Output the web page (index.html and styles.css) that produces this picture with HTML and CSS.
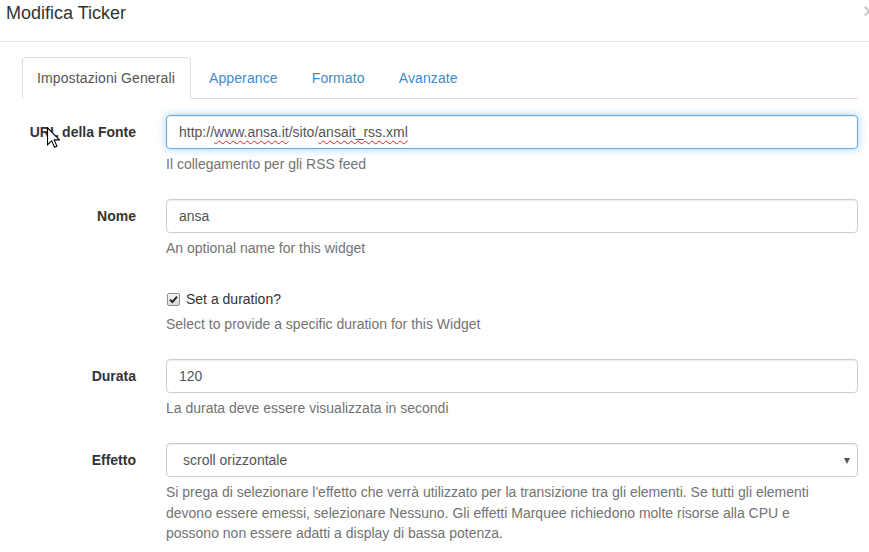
FILE: index.html
```
<!DOCTYPE html>
<html lang="it">
<head>
<meta charset="utf-8">
<title>Modifica Ticker</title>
<link rel="stylesheet" href="styles.css">
</head>
<body>
<div class="modal">
  <div class="modal-header">
    <h4 class="modal-title">Modifica Ticker</h4>
    <span class="close">&times;</span>
  </div>
  <div class="modal-body">
    <ul class="nav-tabs">
      <li class="tab active"><a>Impostazioni Generali</a></li>
      <li class="tab"><a>Apperance</a></li>
      <li class="tab"><a>Formato</a></li>
      <li class="tab"><a>Avanzate</a></li>
    </ul>
    <div class="tab-pane">
      <div class="form-group">
        <label class="control-label">URL della Fonte</label>
        <div class="field">
          <div class="form-control focused">http://<span class="misspelled">www.ansa.it</span>/sito/<span class="misspelled">ansait_rss.xml</span></div>
          <p class="help-block">Il collegamento per gli RSS feed</p>
        </div>
      </div>
      <div class="form-group">
        <label class="control-label">Nome</label>
        <div class="field">
          <div class="form-control">ansa</div>
          <p class="help-block">An optional name for this widget</p>
        </div>
      </div>
      <div class="form-group">
        <span class="control-label"></span>
        <div class="field">
          <div class="checkbox">
            <span class="check-box"><svg viewBox="0 0 9 9" width="9" height="9"><path d="M1 4.6 L3.4 7 L8 1.6" fill="none" stroke="#222" stroke-width="1.9"/></svg></span>
            <span class="check-label">Set a duration?</span>
          </div>
          <p class="help-block">Select to provide a specific duration for this Widget</p>
        </div>
      </div>
      <div class="form-group">
        <label class="control-label">Durata</label>
        <div class="field">
          <div class="form-control">120</div>
          <p class="help-block">La durata deve essere visualizzata in secondi</p>
        </div>
      </div>
      <div class="form-group">
        <label class="control-label">Effetto</label>
        <div class="field">
          <div class="form-control select"><span class="select-value">scroll orizzontale</span><span class="select-arrow"></span></div>
          <p class="help-block help-long">Si prega di selezionare l'effetto che verrà utilizzato per la transizione tra gli elementi. Se tutti gli elementi devono essere emessi, selezionare Nessuno. Gli effetti Marquee richiedono molte risorse alla CPU e possono non essere adatti a display di bassa potenza.</p>
        </div>
      </div>
    </div>
  </div>
  <svg class="cursor" viewBox="0 0 12 19" width="13" height="21"><polygon points="0.5,0.5 0.5,16.2 4.3,12.6 7,18.5 9.2,17.5 6.6,11.7 11.5,11.7" fill="#fff" stroke="#000" stroke-width="1" stroke-linejoin="miter"/></svg>
</div>
</body>
</html>
```
FILE: styles.css
```
html, body {
  margin: 0;
  padding: 0;
  background: #fff;
  overflow: hidden;
}
body {
  font-family: "Liberation Sans", Arial, Helvetica, sans-serif;
  font-size: 14px;
  line-height: 1.42857;
  color: #333;
}
.modal {
  position: relative;
  width: 869px;
  height: 552px;
  overflow: hidden;
}
.modal-header {
  display: flex;
  justify-content: space-between;
  align-items: flex-start;
  padding: 0 0 15px 6px;
  border-bottom: 1px solid #e5e5e5;
}
.modal-title {
  margin: 0;
  font-size: 18px;
  font-weight: normal;
  line-height: 26px;
  color: #333;
}
.close {
  font-size: 21px;
  font-weight: bold;
  line-height: 21px;
  color: #000;
  opacity: 0.2;
  margin-right: -7px;
  width: 13px;
}
.modal-body {
  padding: 15px 11px 0 22px;
}
.nav-tabs {
  display: flex;
  list-style: none;
  margin: 0;
  padding: 0;
  border-bottom: 1px solid #ddd;
}
.tab {
  margin-right: 2px;
  margin-bottom: -1px;
}
.tab a {
  display: block;
  padding: 10px 15px;
  line-height: 20px;
  letter-spacing: 0.12px;
  border: 1px solid transparent;
  border-radius: 4px 4px 0 0;
  color: #428bca;
  cursor: pointer;
}
.tab.active a {
  padding-left: 14px;
  padding-right: 15px;
  color: #555;
  background: #fff;
  border-color: #ddd;
  border-bottom-color: transparent;
}
.tab-pane {
  padding-top: 16px;
}
.form-group {
  display: grid;
  grid-template-columns: 114px 1fr;
  column-gap: 30px;
  margin-bottom: 15px;
}
.control-label {
  text-align: right;
  font-weight: bold;
  padding-top: 7px;
  line-height: 20px;
}
.field {
  min-width: 0;
}
.form-control {
  box-sizing: border-box;
  height: 34px;
  padding: 6px 12px;
  line-height: 20px;
  color: #555;
  background: #fff;
  border: 1px solid #ccc;
  border-radius: 4px;
  box-shadow: inset 0 1px 1px rgba(0, 0, 0, 0.075);
  white-space: nowrap;
}
.form-control.focused {
  border-color: #66afe9;
  box-shadow: inset 0 1px 1px rgba(0, 0, 0, 0.075), 0 0 8px rgba(102, 175, 233, 0.6);
}
.misspelled {
  text-decoration: underline wavy #e02020;
  text-decoration-thickness: 1px;
  text-underline-offset: 3px;
}
.select {
  display: flex;
  align-items: center;
  justify-content: space-between;
  padding-left: 16px;
  padding-right: 7px;
}
.select-arrow {
  width: 0;
  height: 0;
  border-left: 3.5px solid transparent;
  border-right: 3.5px solid transparent;
  border-top: 6px solid #555;
  margin-top: 1px;
}
.help-block {
  margin: 5px 0 10px;
  color: #737373;
  line-height: 20px;
}
.help-long {
  max-width: 676px;
  line-height: 20.5px;
}
.checkbox {
  display: flex;
  align-items: center;
  padding-top: 6px;
  line-height: 20px;
  height: 20px;
  margin-bottom: 1px;
}
.check-box {
  box-sizing: border-box;
  width: 13px;
  height: 13px;
  margin-left: 1px;
  margin-right: 6px;
  border: 1px solid #8f8f8f;
  border-radius: 2px;
  background: linear-gradient(#f4f4f4, #dadada);
  display: flex;
  align-items: center;
  justify-content: center;
}
.check-box svg {
  display: block;
}
.check-label {
  color: #333;
}
.cursor {
  position: absolute;
  left: 47px;
  top: 127px;
}
```
